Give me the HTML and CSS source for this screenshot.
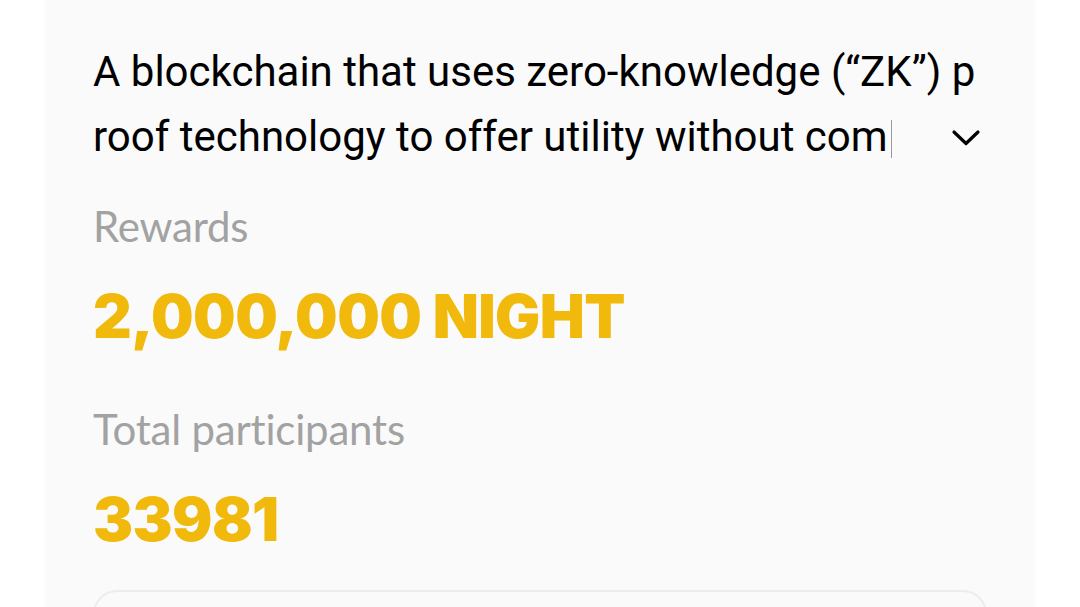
FILE: index.html
```html
<!DOCTYPE html>
<html>
<head>
<meta charset="utf-8">
<link rel="stylesheet" href="styles.css">
</head>
<body>
<div class="card">
  <div class="desc">
    <p class="desc-text">A blockchain that uses zero-knowledge (“ZK”) proof technology to offer utility without com</p>
    <span class="chevron">
      <svg width="30" height="18" viewBox="0 0 30 18"><path d="M3 3 L15 14.5 L27 3" fill="none" stroke="#000" stroke-width="3.2" stroke-linecap="round" stroke-linejoin="round"/></svg>
    </span>
  </div>
  <div class="stat">
    <div class="label">Rewards</div>
    <div class="value">2,000,000 NIGHT</div>
  </div>
  <div class="stat stat-2">
    <div class="label">Total participants</div>
    <div class="value">33981</div>
  </div>
  <div class="inner-box"></div>
</div>
</body>
</html>
```

FILE: styles.css
```css
html, body {
  margin: 0;
  padding: 0;
  background: #ffffff;
  overflow: hidden;
  height: 607px;
}
.card {
  margin-left: 45px;
  width: 990px;
  height: 607px;
  overflow: hidden;
  background: #fafafa;
  padding: 39px 48px 0;
  box-sizing: border-box;
}
.desc {
  position: relative;
}
.desc-text {
  margin: 0;
  font-family: Roboto, "Noto Sans", sans-serif;
  font-size: 42px;
  line-height: 65px;
  color: #000;
  word-break: break-all;
  height: 130px;
  overflow: hidden;
  width: 895px;
}
.chevron {
  position: absolute;
  right: 0;
  top: 65px;
  width: 96px;
  height: 65px;
  display: flex;
  align-items: center;
  justify-content: flex-end;
  padding-right: 6px;
  box-sizing: border-box;
}
.chevron::before {
  content: "";
  position: absolute;
  left: 0;
  top: 16px;
  width: 1px;
  height: 38px;
  background: #9a9a9a;
}
.chevron svg {
  display: block;
  margin-top: 2px;
}
.stat {
  margin-top: 33px;
}
.stat-2 {
  margin-top: 53px;
}
.label {
  font-family: Lato, "Noto Sans", sans-serif;
  font-weight: 400;
  font-size: 42px;
  line-height: 48px;
  letter-spacing: -0.2px;
  color: #a2a2a2;
}
.value {
  margin-top: 30px;
  font-family: Inter, "Noto Sans", sans-serif;
  font-weight: 900;
  font-size: 60px;
  line-height: 72px;
  letter-spacing: -0.6px;
  color: #f0b90b;
}
.inner-box {
  margin-top: 35px;
  height: 120px;
  border: 2px solid #ececec;
  border-radius: 24px;
  background: #fafafa;
}
```
